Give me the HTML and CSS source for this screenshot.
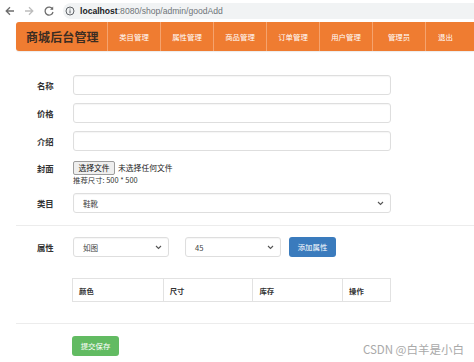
FILE: index.html
```html
<!DOCTYPE html>
<html lang="zh-CN">
<head>
<meta charset="utf-8">
<title>goodAdd</title>
<link rel="stylesheet" href="styles.css">
</head>
<body>
<div class="chrome">
  <svg class="ic back" width="12" height="12" viewBox="0 0 12 12"><path d="M10 6H2.5M6 2.2L2.2 6 6 9.8" fill="none" stroke="#6d6d6d" stroke-width="1.3"/></svg>
  <svg class="ic fwd" width="12" height="12" viewBox="0 0 12 12"><path d="M2 6h7.5M6 2.2L9.8 6 6 9.8" fill="none" stroke="#bdbdbd" stroke-width="1.3"/></svg>
  <svg class="ic reload" width="12" height="12" viewBox="0 0 12 12"><path d="M9.6 4.2A4 4 0 1 0 10 7" fill="none" stroke="#6d6d6d" stroke-width="1.3"/><path d="M10.2 1.6v3.2H7z" fill="#6d6d6d"/></svg>
  <div class="omnibox">
    <svg class="info" width="10" height="10" viewBox="0 0 10 10"><circle cx="5" cy="5" r="4" fill="none" stroke="#5f6368" stroke-width="1"/><path d="M5 4.3v3M5 2.6v.9" stroke="#5f6368" stroke-width="1"/></svg>
    <span class="host">localhost</span><span class="path">:8080/shop/admin/goodAdd</span>
  </div>
</div>

<nav class="navbar">
  <div class="brand">商城后台管理</div>
  <div class="nav-item">类目管理</div>
  <div class="nav-item">属性管理</div>
  <div class="nav-item">商品管理</div>
  <div class="nav-item">订单管理</div>
  <div class="nav-item">用户管理</div>
  <div class="nav-item">管理员</div>
  <div class="nav-item last">退出</div>
</nav>

<form class="form">
  <div class="row">
    <label class="label">名称</label>
    <input class="input" type="text">
  </div>
  <div class="row">
    <label class="label">价格</label>
    <input class="input" type="text">
  </div>
  <div class="row">
    <label class="label">介绍</label>
    <input class="input" type="text">
  </div>
  <div class="row row-top">
    <label class="label label-file">封面</label>
    <div class="file-col">
      <div class="file-line"><span class="file-btn">选择文件</span><span class="file-none">未选择任何文件</span></div>
      <div class="hint">推荐尺寸: 500 * 500</div>
    </div>
  </div>
  <div class="row">
    <label class="label">类目</label>
    <div class="select wide"><span>鞋靴</span><svg class="chev" width="7" height="5" viewBox="0 0 7 5"><path d="M1 1l2.5 2.5L6 1" fill="none" stroke="#555" stroke-width="1.1"/></svg></div>
  </div>

  <div class="divider first"></div>

  <div class="row attr-row">
    <label class="label">属性</label>
    <div class="select small"><span>如图</span><svg class="chev" width="7" height="5" viewBox="0 0 7 5"><path d="M1 1l2.5 2.5L6 1" fill="none" stroke="#555" stroke-width="1.1"/></svg></div>
    <div class="select small second"><span>45</span><svg class="chev" width="7" height="5" viewBox="0 0 7 5"><path d="M1 1l2.5 2.5L6 1" fill="none" stroke="#555" stroke-width="1.1"/></svg></div>
    <span class="btn btn-blue">添加属性</span>
  </div>

  <div class="table-wrap">
    <table class="table">
      <tr><th class="c1">颜色</th><th class="c2">尺寸</th><th class="c3">库存</th><th class="c4">操作</th></tr>
    </table>
  </div>

  <div class="divider second-div"></div>

  <div class="submit-row"><span class="btn btn-green">提交保存</span></div>
</form>

<div class="watermark">CSDN @白羊是小白</div>
</body>
</html>
```

FILE: styles.css
```css
* { box-sizing: border-box; }
html, body { margin: 0; padding: 0; background: #fff; }
body {
  font-family: "Noto Sans CJK SC", "Liberation Sans", sans-serif;
  color: #333;
  width: 474px;
  height: 362px;
  overflow: hidden;
  position: relative;
}

/* browser chrome */
.chrome {
  height: 21px;
  display: flex;
  align-items: center;
  padding-left: 4px;
}
.ic { flex: none; }
.back { margin-right: 7px; }
.fwd { margin-right: 8px; }
.reload { margin-right: 8px; }
.omnibox {
  flex: 1;
  height: 16px;
  background: #f1f3f4;
  border-radius: 8px 0 0 8px;
  display: flex;
  align-items: center;
  padding-left: 2px;
  font-family: "Liberation Sans", "Noto Sans", sans-serif;
  font-size: 8.6px;
}
.info { margin-right: 5px; }
.host { color: #202124; font-weight: bold; }
.path { color: #6f7378; }

/* navbar */
.navbar {
  margin: 1px 0 0 16px;
  height: 29px;
  background: #ef7c31;
  border-radius: 3px 0 0 3px;
  display: flex;
  align-items: stretch;
  box-shadow: 0 1px 1px rgba(0,0,0,0.08);
}
.brand {
  width: 91px;
  padding-left: 10px;
  font-size: 12px;
  font-weight: bold;
  line-height: 29px;
  color: #3b2c22;
  letter-spacing: 0.1px;
}
.nav-item {
  width: 53px;
  border-left: 1px solid #f5a36e;
  color: #fff;
  font-size: 7.4px;
  line-height: 29px;
  text-align: center;
}
.nav-item.last { width: 40px; flex: none; }

/* form */
.form { padding-top: 24px; display: flex; flex-direction: column; }
.row {
  display: flex;
  align-items: center;
  margin-left: 37px;
  margin-bottom: 8px;
}
.row-top { align-items: flex-start; }
.label {
  width: 36px;
  flex: none;
  font-size: 8.4px;
  font-weight: bold;
  color: #333;
}
.label-file { line-height: 14px; margin-top: 2px; }
.input {
  width: 318px;
  height: 20px;
  border: 1px solid #dedede;
  border-radius: 3px;
  box-shadow: inset 0 1px 1px rgba(0,0,0,0.04);
  background: #fff;
  margin: 0;
  padding: 0;
}
.file-col { display: flex; flex-direction: column; }
.file-line { display: flex; align-items: center; height: 15px; margin-top: 1px; }
.file-btn {
  height: 14px;
  width: 42px;
  border: 1px solid #9d9d9d;
  border-radius: 2px;
  background: #efefef;
  font-size: 7.8px;
  line-height: 12px;
  text-align: center;
  color: #111;
}
.file-none { font-size: 7.8px; margin-left: 3px; color: #222; }
.hint { font-size: 7.4px; color: #333; line-height: 10px; }

.select {
  height: 20px;
  border: 1px solid #dedede;
  border-radius: 3px;
  background: #fff;
  display: flex;
  align-items: center;
  justify-content: space-between;
  padding: 0 6px 0 9px;
  font-size: 7.6px;
  color: #444;
  box-shadow: inset 0 1px 1px rgba(0,0,0,0.04);
}
.select.wide { width: 318px; }
.select.small { width: 96px; }
.select.second { margin-left: 16px; }
.chev { flex: none; }

.divider {
  height: 1px;
  background: #ececec;
  margin-left: 16px;
}
.divider.first { margin-top: 4px; }
.attr-row { margin-top: 11px; margin-bottom: 0; }

.btn {
  display: block;
  width: 47px;
  height: 20px;
  border-radius: 3px;
  color: #fff;
  font-size: 7.4px;
  line-height: 20px;
  text-align: center;
}
.btn-blue { background: #3a7bbd; margin-left: 8px; }
.btn-green { background: #62bb62; }

.table-wrap { margin: 21px 0 0 72px; display: flex; }
.table {
  border-collapse: collapse;
  width: 319px;
}
.table th {
  height: 23px;
  border: 1px solid #e2e2e2;
  text-align: left;
  padding: 0 0 0 6px;
  font-size: 7.4px;
  font-weight: bold;
  color: #333;
}
.c1 { width: 91px; }
.c2 { width: 90px; }
.c3 { width: 90px; }
.c4 { width: 48px; }

.divider.second-div { margin-top: 21px; }
.submit-row { margin: 12px 0 0 72px; display: flex; }

.watermark {
  position: absolute;
  right: 10px;
  bottom: 5px;
  font-size: 11.5px;
  color: #a9a9a9;
  font-family: "Noto Sans CJK SC", "Liberation Sans", sans-serif;
}
```
